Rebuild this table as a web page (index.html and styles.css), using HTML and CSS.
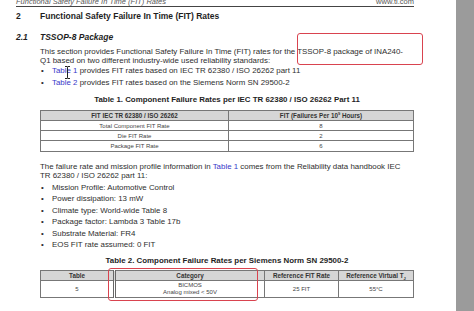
FILE: index.html
```html
<!DOCTYPE html>
<html>
<head>
<meta charset="utf-8">
<link rel="stylesheet" href="styles.css">
</head>
<body>
<div class="screen">
  <div class="page">
    <div class="running-head"><span>Functional Safety Failure In Time (FIT) Rates</span><span>www.ti.com</span></div>
    <h1 class="h1"><span>2</span><span>Functional Safety Failure In Time (FIT) Rates</span></h1>
    <h2 class="h2"><span>2.1</span><span>TSSOP-8 Package</span></h2>
    <div class="content">
      <p class="para p1">This section provides Functional Safety Failure In Time (FIT) rates for the TSSOP-8 package of INA240-<br>Q1 based on two different industry-wide used reliability standards:</p>
      <ul class="list list1">
        <li><span><a class="link">Table 1</a> provides FIT rates based on IEC TR 62380 / ISO 26262 part 11</span></li>
        <li><span><a class="link">Table 2</a> provides FIT rates based on the Siemens Norm SN 29500-2</span></li>
      </ul>
      <div class="caption cap1">Table 1. Component Failure Rates per IEC TR 62380 / ISO 26262 Part 11</div>
      <table class="tbl t1">
        <thead><tr><th class="c-a">FIT IEC TR 62380 / ISO 26262</th><th>FIT (Failures Per 10<sup>9</sup> Hours)</th></tr></thead>
        <tbody>
          <tr><td>Total Component FIT Rate</td><td>8</td></tr>
          <tr><td>Die FIT Rate</td><td>2</td></tr>
          <tr class="last"><td>Package FIT Rate</td><td>6</td></tr>
        </tbody>
      </table>
      <p class="para p2">The failure rate and mission profile information in <a class="link">Table 1</a> comes from the Reliability data handbook IEC<br>TR 62380 / ISO 26262 part 11:</p>
      <ul class="list list2">
        <li><span>Mission Profile: Automotive Control</span></li>
        <li><span>Power dissipation: 13 mW</span></li>
        <li><span>Climate type: World-wide Table 8</span></li>
        <li><span>Package factor: Lambda 3 Table 17b</span></li>
        <li><span>Substrate Material: FR4</span></li>
        <li><span>EOS FIT rate assumed: 0 FIT</span></li>
      </ul>
      <div class="caption cap2">Table 2. Component Failure Rates per Siemens Norm SN 29500-2</div>
      <table class="tbl t2">
        <thead><tr><th class="w1">Table</th><th class="w2 dbl">Category</th><th class="w3">Reference FIT Rate</th><th class="w4">Reference Virtual T<sub>J</sub></th></tr></thead>
        <tbody>
          <tr class="two"><td>5</td><td class="dbl">BICMOS<br>Analog mixed &lt; 50V</td><td>25 FIT</td><td>55°C</td></tr>
        </tbody>
      </table>
    </div>
    <div class="mark mark1"></div>
    <div class="mark mark2"></div>
    <svg class="cursor" width="7" height="13" viewBox="0 0 7 13"><path d="M1 0.5 H3 Q3.5 0.5 3.5 1.5 V11.5 Q3.5 12.5 3 12.5 H1 M6 0.5 H4 Q3.5 0.5 3.5 1.5 M3.5 11.5 Q3.5 12.5 4 12.5 H6" fill="none" stroke="#222" stroke-width="1"/></svg>
  </div>
  <div class="scrollbar"></div>
</div>
</body>
</html>
```

FILE: styles.css
```css
html, body {
  margin: 0;
  padding: 0;
  background: #fff;
}
.screen {
  display: flex;
  width: 474px;
  height: 311px;
  overflow: hidden;
  font-family: "Liberation Sans", Arial, sans-serif;
  color: #2e2e2e;
}
.page {
  position: relative;
  flex: 1;
  padding-left: 16px;
  padding-right: 42px;
}
.scrollbar {
  width: 18px;
  background: #9b9b9b;
}
.running-head {
  margin-top: -3px;
  display: flex;
  justify-content: space-between;
  font-size: 7.5px;
  font-style: italic;
  line-height: 9px;
  color: #555;
  border-bottom: 1px solid #444;
}
.running-head span:last-child {
  font-style: normal;
}
.h1, .h2 {
  display: grid;
  grid-template-columns: 24px 1fr;
  margin: 0;
  font-size: 8.5px;
  line-height: 11px;
  font-weight: bold;
  color: #1e1e1e;
}
.h1 {
  margin-top: 4px;
}
.h2 {
  margin-top: 10px;
  font-style: italic;
}
.content {
  padding-left: 24px;
}
.para {
  margin: 5px 0 0;
  font-size: 7.9px;
  line-height: 8.5px;
  white-space: nowrap;
}
.link {
  color: #3838c8;
}
.list {
  list-style: none;
  margin: 0;
  padding: 0;
  font-size: 7.9px;
}
.list li {
  display: grid;
  grid-template-columns: 12px 1fr;
  line-height: 11.5px;
  height: 11.5px;
  white-space: nowrap;
}
.list li::before {
  content: "•";
  padding-left: 1px;
}
.list2 {
  margin-top: 2px;
}
.list2 li {
  height: 11.4px;
  line-height: 11.4px;
}
.caption {
  text-align: center;
  font-weight: bold;
  font-size: 7.9px;
  line-height: 10px;
  color: #1e1e1e;
  margin-top: 7px;
  white-space: nowrap;
}
.tbl {
  width: 374px;
  border-collapse: collapse;
  font-size: 6px;
  color: #444;
  margin-top: 5px;
}
.cap2 {
  margin-top: 6px;
}
.t2 {
  margin-top: 4px;
}
.tbl th, .tbl td {
  border: 1px solid #777;
  padding: 0;
  text-align: center;
  line-height: 8px;
}
.tbl th {
  background: #d6d6d6;
  font-weight: bold;
  font-size: 6.3px;
  color: #333;
  height: 9px;
}
.tbl td {
  height: 9px;
}
.t1 {
  border: 1px solid #555;
}
.t1 .c-a {
  width: 187px;
}
.t1 tr.last td {
  height: 10px;
}
.tbl sup, .tbl sub {
  font-size: 4px;
  line-height: 0;
}
.t2 {
  border: 1px solid #555;
}
.t2 .w1 { width: 72px; }
.t2 .w2 { width: 148px; }
.t2 .w3 { width: 73px; }
.t2 .dbl {
  border-left: 3px double #666;
}
.t2 tr.two td {
  height: 16px;
  line-height: 7px;
}
.p2 {
  margin-top: 11px;
}
.mark {
  position: absolute;
  border: 1.5px solid #d9434f;
  border-radius: 3px;
}
.mark1 {
  left: 297px;
  top: 33px;
  width: 124px;
  height: 30px;
}
.mark2 {
  left: 108px;
  top: 268px;
  width: 148px;
  height: 31px;
}
.cursor {
  position: absolute;
  left: 64px;
  top: 66px;
}
```
